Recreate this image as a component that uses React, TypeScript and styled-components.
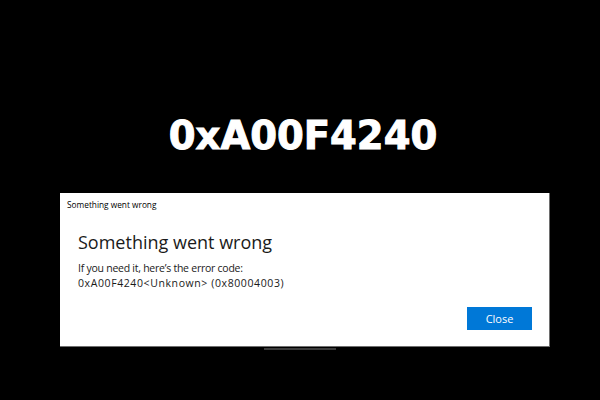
import React from "react";
import styled, { createGlobalStyle } from "styled-components";

const Global = createGlobalStyle`
  html, body { margin: 0; padding: 0; background: #000; }
  #root { width: 600px; height: 400px; }
`;

const Page = styled.div`
  width: 600px;
  height: 400px;
  background: #000;
  display: flex;
  flex-direction: column;
  box-sizing: border-box;
  padding-top: 112px;
  overflow: hidden;
`;

const BigCode = styled.h1`
  margin: 0 0 0 6px;
  height: 48px;
  line-height: 48px;
  text-align: center;
  font-family: "DejaVu Sans", "Liberation Sans", sans-serif;
  font-weight: 700;
  font-size: 38.5px;
  letter-spacing: 0;
  color: #fff;
  -webkit-text-stroke: 1px #fff;
`;

const Dialog = styled.div`
  margin: 33px 0 0 60px;
  width: 490px;
  height: 154px;
  box-sizing: border-box;
  background: #fff;
  border-right: 1px solid #6e6e6e;
  border-bottom: 1px solid #6e6e6e;
  display: flex;
  flex-direction: column;
  font-family: "Open Sans", "Noto Sans", sans-serif;
  color: #000;
`;

const TitleBar = styled.div`
  padding: 6px 0 0 7px;
  height: 12px;
  line-height: 12px;
  font-size: 8.3px;
  color: #000;
`;

const Content = styled.div`
  padding: 19px 17px 0 18px;
  display: flex;
  flex-direction: column;
  flex: 1;
`;

const Heading = styled.h2`
  margin: 0;
  font-weight: 400;
  font-size: 18px;
  line-height: 24px;
  color: #1a1a1a;
`;

const Body = styled.div`
  margin: 6.5px 0 0;
  display: flex;
  flex-direction: column;
  font-size: 10.5px;
  line-height: 15px;
  color: #1a1a1a;
`;

const Line = styled.span<{ $spacing: number }>`
  display: block;
  white-space: nowrap;
  letter-spacing: ${(p) => p.$spacing}px;
`;

const Actions = styled.div`
  display: flex;
  justify-content: flex-end;
  margin-top: 16px;
`;

const Button = styled.button`
  width: 65px;
  height: 23px;
  border: none;
  background: #0078d7;
  color: #fff;
  font-family: "Open Sans", "Noto Sans", sans-serif;
  font-size: 11px;
  padding: 0;
  cursor: pointer;
`;

const UnderBar = styled.div`
  margin: 1px 0 0 264px;
  width: 72px;
  height: 2px;
  background: #3a3a3a;
`;

export default function App() {
  return (
    <>
      <Global />
      <Page>
        <BigCode>0xA00F4240</BigCode>
        <Dialog>
          <TitleBar>Something went wrong</TitleBar>
          <Content>
            <Heading>Something went wrong</Heading>
            <Body>
              <Line $spacing={-0.25}>If you need it, here’s the error code:</Line>
              <Line $spacing={0.6}>0xA00F4240&lt;Unknown&gt; (0x80004003)</Line>
            </Body>
            <Actions>
              <Button>Close</Button>
            </Actions>
          </Content>
        </Dialog>
        <UnderBar />
      </Page>
    </>
  );
}
